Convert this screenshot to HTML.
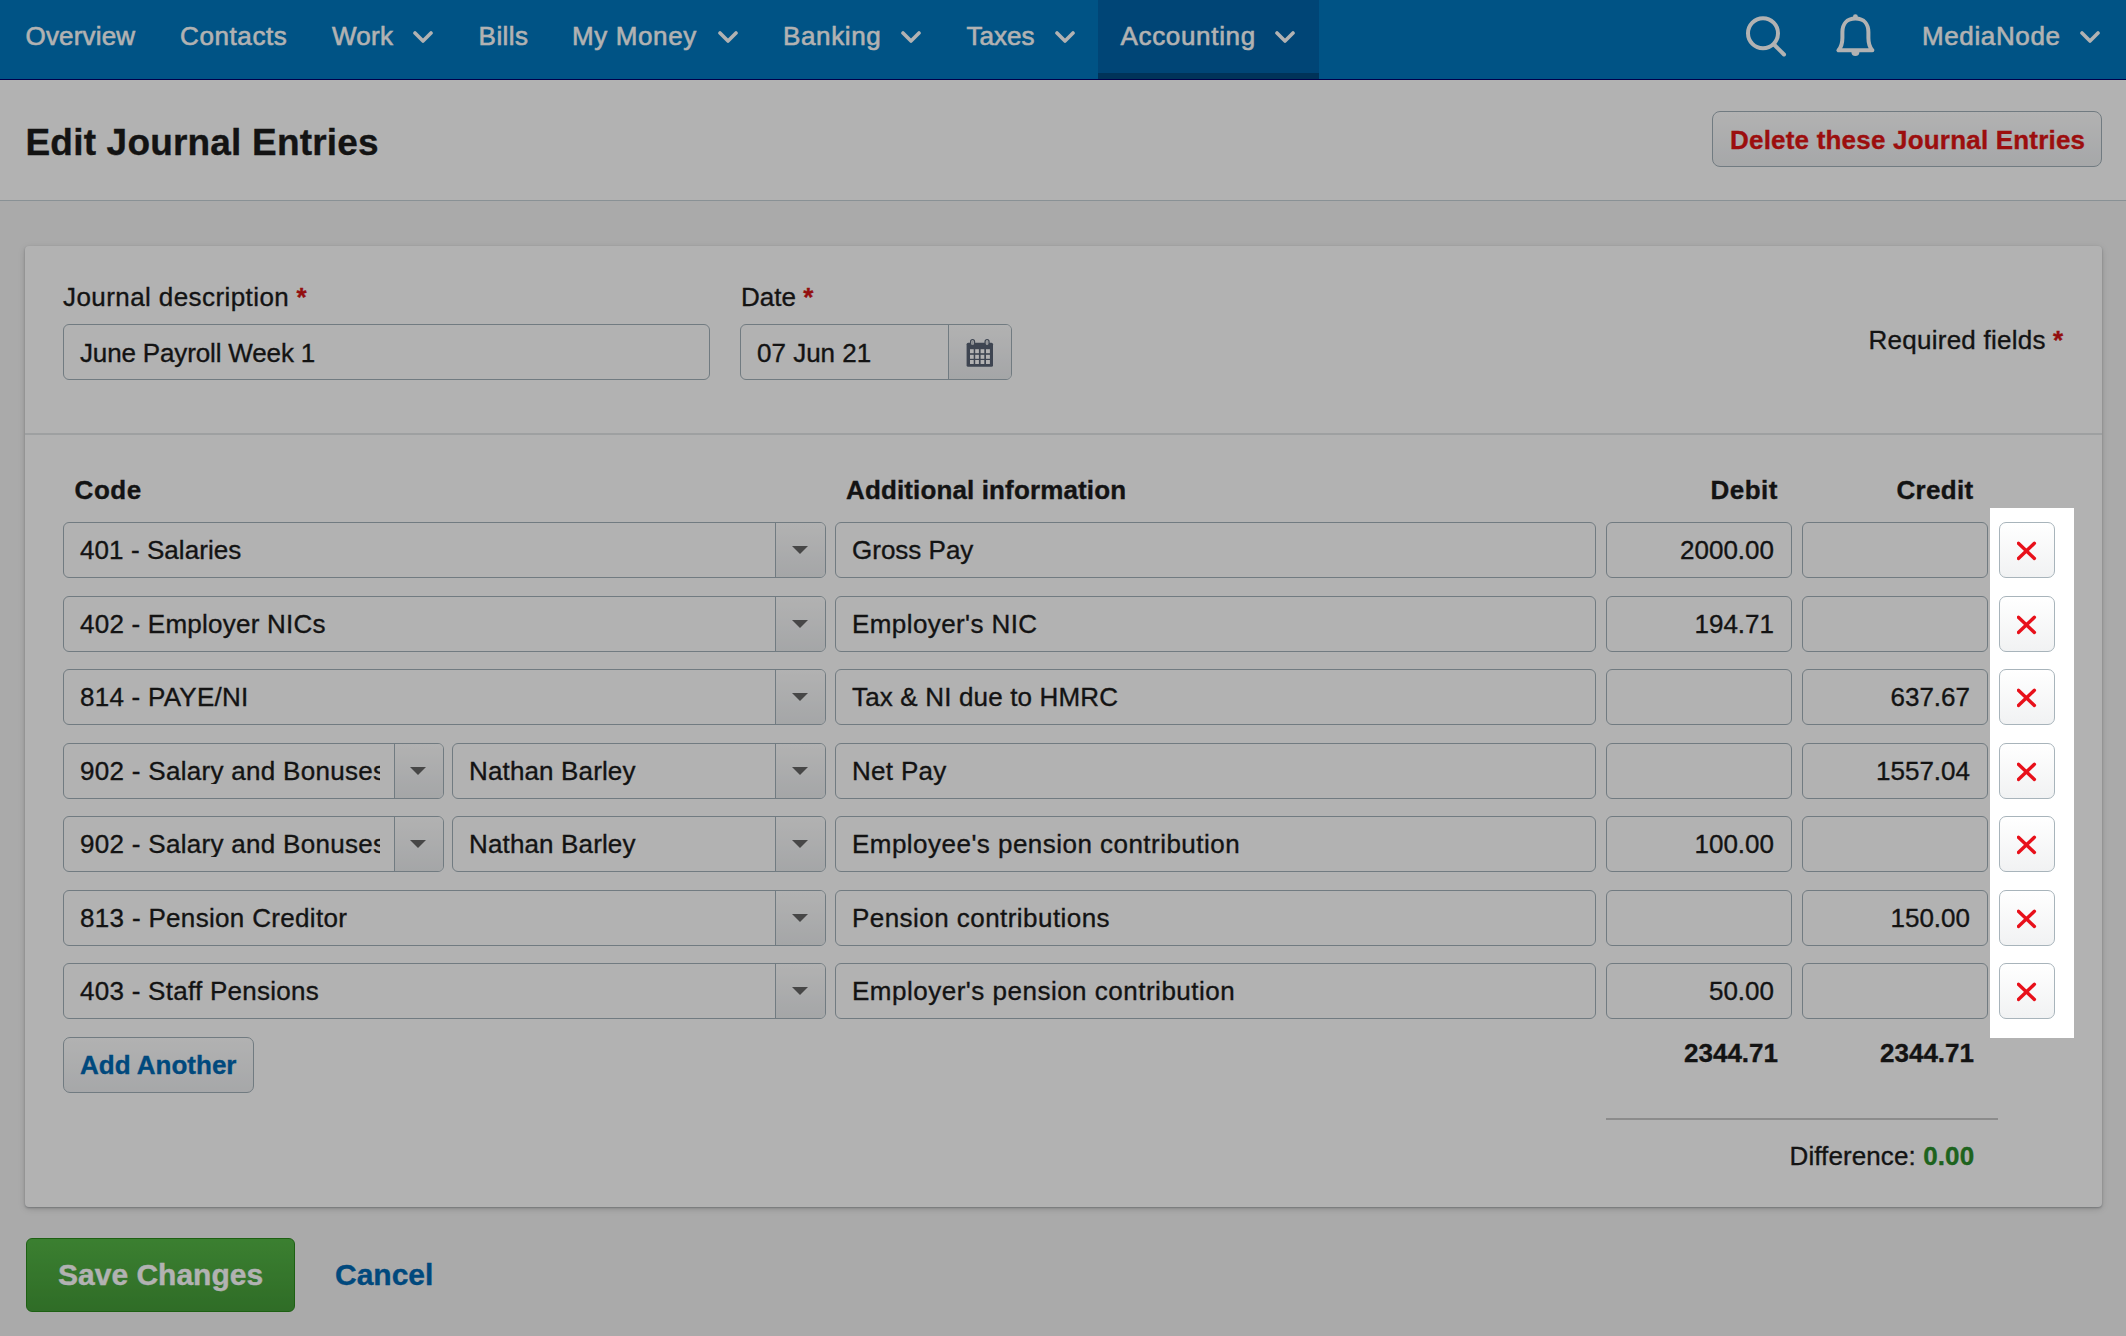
<!DOCTYPE html>
<html><head><meta charset="utf-8">
<style>
*{box-sizing:border-box;margin:0;padding:0}
html,body{width:2126px;height:1336px;overflow:hidden}
body{position:relative;background:#f4f4f4;font-family:"Liberation Sans",sans-serif;color:#1c1c1c;-webkit-text-stroke:0.35px currentColor}
.a{position:absolute}
.t{position:absolute;line-height:1;white-space:nowrap}
.b{font-weight:bold}
#nav{left:0;top:0;width:2126px;height:79px;background:#0078bf}
#navline{left:0;top:79px;width:2126px;height:1px;background:#00006a}
.nt{color:#fff;font-size:26px;top:23px;-webkit-text-stroke:0.55px #fff}
.chev{position:absolute;top:31px;width:20px;height:12px}
#active{left:1098px;top:0;width:221px;height:79px;background:#0063aa}
#activestrip{left:1098px;top:73px;width:221px;height:6px;background:#004a80}
#hdr{left:0;top:80px;width:2126px;height:120px;background:#fff}
#hdrline{left:0;top:200px;width:2126px;height:1px;background:#c5d0d6}
.btn{position:absolute;border:1px solid #a3b1b9;border-radius:8px;background:linear-gradient(#fff,#eef0f2)}
#card{left:25px;top:246px;width:2077px;height:961px;background:#fff;border-radius:4px;box-shadow:0 1px 2px rgba(30,40,50,.28),0 2px 7px rgba(0,0,0,.16)}
.inp{position:absolute;height:56px;border:1px solid #a3b1b9;border-radius:6px;background:#fff;overflow:hidden}
.it{position:absolute;top:14px;left:16px;font-size:26px;line-height:1;white-space:nowrap}
.sel .seg{position:absolute;right:0;top:0;bottom:0;width:50px;border-left:1px solid #a3b1b9;background:linear-gradient(#fff,#eceef0)}
.sel .tri{position:absolute;left:16px;top:23px;width:0;height:0;border-left:8px solid transparent;border-right:8px solid transparent;border-top:8px solid #666}
.num .it{left:auto;right:17px}
.req{color:#d31616}
.xb{position:absolute;left:1999px;width:56px;height:56px;border:1px solid #a8b4bb;border-radius:7px;background:linear-gradient(#fff,#f1f2f3)}
#hl{left:1990px;top:508px;width:84px;height:530px;box-shadow:0 0 0 5000px rgba(0,0,0,.3)}
</style></head>
<body>
<!-- NAV -->
<div class="a" id="nav"></div>
<div class="a" id="active"></div>
<div class="a" id="activestrip"></div>
<div class="a" id="navline"></div>
<div class="t nt" style="left:25.5px;letter-spacing:0.17px">Overview</div>
<div class="t nt" style="left:180px;letter-spacing:0.6px">Contacts</div>
<div class="t nt" style="left:332px;letter-spacing:0.25px">Work</div>
<svg class="chev" style="left:413px" viewBox="0 0 20 12"><path d="M2 2 L10 10 L18 2" fill="none" stroke="#fff" stroke-width="3.6" stroke-linecap="round" stroke-linejoin="round"/></svg>
<div class="t nt" style="left:478.6px;letter-spacing:0.45px">Bills</div>
<div class="t nt" style="left:572px;letter-spacing:0.62px">My Money</div>
<svg class="chev" style="left:718px" viewBox="0 0 20 12"><path d="M2 2 L10 10 L18 2" fill="none" stroke="#fff" stroke-width="3.6" stroke-linecap="round" stroke-linejoin="round"/></svg>
<div class="t nt" style="left:783px;letter-spacing:0.63px">Banking</div>
<svg class="chev" style="left:901px" viewBox="0 0 20 12"><path d="M2 2 L10 10 L18 2" fill="none" stroke="#fff" stroke-width="3.6" stroke-linecap="round" stroke-linejoin="round"/></svg>
<div class="t nt" style="left:966.5px;letter-spacing:0.05px">Taxes</div>
<svg class="chev" style="left:1055px" viewBox="0 0 20 12"><path d="M2 2 L10 10 L18 2" fill="none" stroke="#fff" stroke-width="3.6" stroke-linecap="round" stroke-linejoin="round"/></svg>
<div class="t nt" style="left:1120.5px;letter-spacing:0.67px">Accounting</div>
<svg class="chev" style="left:1275px" viewBox="0 0 20 12"><path d="M2 2 L10 10 L18 2" fill="none" stroke="#fff" stroke-width="3.6" stroke-linecap="round" stroke-linejoin="round"/></svg>
<svg class="a" style="left:1740px;top:10px" width="52" height="52" viewBox="0 0 52 52"><circle cx="23" cy="23.3" r="15" fill="none" stroke="#fff" stroke-width="4"/><path d="M34 34.5 L44 44.5" stroke="#fff" stroke-width="4" stroke-linecap="round"/></svg>
<svg class="a" style="left:1830px;top:10px" width="52" height="50" viewBox="0 0 52 50"><path d="M25.4 8.6 C16.5 8.6 12.4 14.5 12.4 22 L12.4 28 C12.4 33 11.4 37 8.4 40.3 L42.4 40.3 C39.4 37 38.4 33 38.4 28 L38.4 22 C38.4 14.5 34.3 8.6 25.4 8.6 Z" fill="none" stroke="#fff" stroke-width="4" stroke-linejoin="round"/><circle cx="25.4" cy="6.6" r="2.4" fill="#fff"/><path d="M21.4 42 A4 4 0 0 0 29.4 42 Z" fill="#fff"/></svg>
<div class="t nt" style="left:1922px;letter-spacing:0.62px">MediaNode</div>
<svg class="chev" style="left:2080px" viewBox="0 0 20 12"><path d="M2 2 L10 10 L18 2" fill="none" stroke="#fff" stroke-width="3.6" stroke-linecap="round" stroke-linejoin="round"/></svg>

<!-- HEADER -->
<div class="a" id="hdr"></div>
<div class="a" id="hdrline"></div>
<div class="t b" style="left:25.5px;top:124px;font-size:37px;letter-spacing:0.19px">Edit Journal Entries</div>
<div class="btn" style="left:1712px;top:111px;width:390px;height:56px"></div>
<div class="t b" style="left:1730px;top:127px;font-size:26px;color:#e01515;letter-spacing:0.2px">Delete these Journal Entries</div>

<!-- CARD -->
<div class="a" id="card"></div>
<div class="a" style="left:25px;top:433px;width:2077px;height:2px;background:#e2e5e7"></div>
<div class="t" style="left:63px;top:284px;font-size:26px"><span style="letter-spacing:0.42px">Journal description</span> <span class="req b">*</span></div>
<div class="inp" style="left:63px;top:324px;width:647px"><div class="it" style="top:15px;letter-spacing:-0.15px">June Payroll Week 1</div></div>
<div class="t" style="left:741px;top:284px;font-size:26px">Date <span class="req b">*</span></div>
<div class="inp sel" style="left:740px;top:324px;width:272px"><div class="it" style="top:15px">07 Jun 21</div><div class="seg" style="width:63px"><svg class="a" style="left:17px;top:13px" width="28" height="30" viewBox="0 0 28 30"><rect x="0.6" y="4.8" width="26.4" height="24" rx="1.5" fill="#596475"/><rect x="4.6" y="1.6" width="3.9" height="6" rx="1.9" fill="#fff" stroke="#596475" stroke-width="1.3"/><rect x="19.1" y="1.6" width="3.9" height="6" rx="1.9" fill="#fff" stroke="#596475" stroke-width="1.3"/><rect x="5.8" y="3" width="1.5" height="4" fill="#596475" opacity="0.35"/><rect x="20.3" y="3" width="1.5" height="4" fill="#596475" opacity="0.35"/><g fill="#fff"><rect x="4" y="11.2" width="3.7" height="4"/><rect x="9.2" y="11.2" width="3.7" height="4"/><rect x="14.6" y="11.2" width="3.7" height="4"/><rect x="20" y="11.2" width="3.9" height="4"/><rect x="4" y="16.8" width="3.7" height="4"/><rect x="9.2" y="16.8" width="3.7" height="4"/><rect x="14.6" y="16.8" width="3.7" height="4"/><rect x="20" y="16.8" width="3.9" height="4"/><rect x="4" y="22" width="3.7" height="4"/><rect x="9.2" y="22" width="3.7" height="4"/><rect x="14.6" y="22" width="3.7" height="4"/><rect x="20" y="22" width="3.9" height="4"/></g></svg></div></div>
<div class="t" style="left:1868.5px;top:327px;font-size:26px"><span style="letter-spacing:0.26px">Required fields</span> <span class="req b">*</span></div>

<!-- TABLE HEADERS -->
<div class="t b" style="left:74.5px;top:477px;font-size:26px;letter-spacing:0.6px">Code</div>
<div class="t b" style="left:846px;top:477px;font-size:26px;letter-spacing:0.13px">Additional information</div>
<div class="t b" style="left:1710.5px;top:477px;font-size:26px;letter-spacing:0.5px">Debit</div>
<div class="t b" style="left:1896.5px;top:477px;font-size:26px;letter-spacing:0.3px">Credit</div>

<div class="inp sel" style="left:63px;top:522px;width:763px"><div class="it" style="letter-spacing:0.07px">401 - Salaries</div><div class="seg"><div class="tri"></div></div></div>
<div class="inp" style="left:835px;top:522px;width:761px"><div class="it" style="letter-spacing:0px">Gross Pay</div></div>
<div class="inp num" style="left:1606px;top:522px;width:186px"><div class="it">2000.00</div></div>
<div class="inp num" style="left:1802px;top:522px;width:186px"><div class="it"></div></div>
<div class="xb" style="top:522px"><svg class="a" style="left:17px;top:18px" width="20" height="20" viewBox="0 0 20 20"><path d="M1.4 2.3 L17.4 17.4 M17.4 2.3 L1.4 17.4" stroke="#e8101a" stroke-width="3.4" stroke-linecap="round"/></svg></div>
<div class="inp sel" style="left:63px;top:596px;width:763px"><div class="it" style="letter-spacing:0.23px">402 - Employer NICs</div><div class="seg"><div class="tri"></div></div></div>
<div class="inp" style="left:835px;top:596px;width:761px"><div class="it" style="letter-spacing:0.41px">Employer's NIC</div></div>
<div class="inp num" style="left:1606px;top:596px;width:186px"><div class="it">194.71</div></div>
<div class="inp num" style="left:1802px;top:596px;width:186px"><div class="it"></div></div>
<div class="xb" style="top:596px"><svg class="a" style="left:17px;top:18px" width="20" height="20" viewBox="0 0 20 20"><path d="M1.4 2.3 L17.4 17.4 M17.4 2.3 L1.4 17.4" stroke="#e8101a" stroke-width="3.4" stroke-linecap="round"/></svg></div>
<div class="inp sel" style="left:63px;top:669px;width:763px"><div class="it" style="letter-spacing:0.25px">814 - PAYE/NI</div><div class="seg"><div class="tri"></div></div></div>
<div class="inp" style="left:835px;top:669px;width:761px"><div class="it" style="letter-spacing:0.16px">Tax &amp; NI due to HMRC</div></div>
<div class="inp num" style="left:1606px;top:669px;width:186px"><div class="it"></div></div>
<div class="inp num" style="left:1802px;top:669px;width:186px"><div class="it">637.67</div></div>
<div class="xb" style="top:669px"><svg class="a" style="left:17px;top:18px" width="20" height="20" viewBox="0 0 20 20"><path d="M1.4 2.3 L17.4 17.4 M17.4 2.3 L1.4 17.4" stroke="#e8101a" stroke-width="3.4" stroke-linecap="round"/></svg></div>
<div class="inp sel" style="left:63px;top:743px;width:381px"><div class="it" style="width:300px;overflow:hidden;letter-spacing:0.3px">902 - Salary and Bonuses</div><div class="seg" style="width:49px"><div class="tri" style="left:15px"></div></div></div>
<div class="inp sel" style="left:452px;top:743px;width:374px"><div class="it" style="letter-spacing:0.14px">Nathan Barley</div><div class="seg" style="width:50px"><div class="tri"></div></div></div>
<div class="inp" style="left:835px;top:743px;width:761px"><div class="it" style="letter-spacing:0.3px">Net Pay</div></div>
<div class="inp num" style="left:1606px;top:743px;width:186px"><div class="it"></div></div>
<div class="inp num" style="left:1802px;top:743px;width:186px"><div class="it">1557.04</div></div>
<div class="xb" style="top:743px"><svg class="a" style="left:17px;top:18px" width="20" height="20" viewBox="0 0 20 20"><path d="M1.4 2.3 L17.4 17.4 M17.4 2.3 L1.4 17.4" stroke="#e8101a" stroke-width="3.4" stroke-linecap="round"/></svg></div>
<div class="inp sel" style="left:63px;top:816px;width:381px"><div class="it" style="width:300px;overflow:hidden;letter-spacing:0.3px">902 - Salary and Bonuses</div><div class="seg" style="width:49px"><div class="tri" style="left:15px"></div></div></div>
<div class="inp sel" style="left:452px;top:816px;width:374px"><div class="it" style="letter-spacing:0.14px">Nathan Barley</div><div class="seg" style="width:50px"><div class="tri"></div></div></div>
<div class="inp" style="left:835px;top:816px;width:761px"><div class="it" style="letter-spacing:0.47px">Employee's pension contribution</div></div>
<div class="inp num" style="left:1606px;top:816px;width:186px"><div class="it">100.00</div></div>
<div class="inp num" style="left:1802px;top:816px;width:186px"><div class="it"></div></div>
<div class="xb" style="top:816px"><svg class="a" style="left:17px;top:18px" width="20" height="20" viewBox="0 0 20 20"><path d="M1.4 2.3 L17.4 17.4 M17.4 2.3 L1.4 17.4" stroke="#e8101a" stroke-width="3.4" stroke-linecap="round"/></svg></div>
<div class="inp sel" style="left:63px;top:890px;width:763px"><div class="it" style="letter-spacing:0.32px">813 - Pension Creditor</div><div class="seg"><div class="tri"></div></div></div>
<div class="inp" style="left:835px;top:890px;width:761px"><div class="it" style="letter-spacing:0.45px">Pension contributions</div></div>
<div class="inp num" style="left:1606px;top:890px;width:186px"><div class="it"></div></div>
<div class="inp num" style="left:1802px;top:890px;width:186px"><div class="it">150.00</div></div>
<div class="xb" style="top:890px"><svg class="a" style="left:17px;top:18px" width="20" height="20" viewBox="0 0 20 20"><path d="M1.4 2.3 L17.4 17.4 M17.4 2.3 L1.4 17.4" stroke="#e8101a" stroke-width="3.4" stroke-linecap="round"/></svg></div>
<div class="inp sel" style="left:63px;top:963px;width:763px"><div class="it" style="letter-spacing:0.27px">403 - Staff Pensions</div><div class="seg"><div class="tri"></div></div></div>
<div class="inp" style="left:835px;top:963px;width:761px"><div class="it" style="letter-spacing:0.5px">Employer's pension contribution</div></div>
<div class="inp num" style="left:1606px;top:963px;width:186px"><div class="it">50.00</div></div>
<div class="inp num" style="left:1802px;top:963px;width:186px"><div class="it"></div></div>
<div class="xb" style="top:963px"><svg class="a" style="left:17px;top:18px" width="20" height="20" viewBox="0 0 20 20"><path d="M1.4 2.3 L17.4 17.4 M17.4 2.3 L1.4 17.4" stroke="#e8101a" stroke-width="3.4" stroke-linecap="round"/></svg></div>

<!-- TOTALS -->
<div class="btn" style="left:63px;top:1037px;width:191px;height:56px;border-radius:7px"></div>
<div class="t b" style="left:80px;top:1052px;font-size:26px;color:#0069b4">Add Another</div>
<div class="t b" style="left:1684px;top:1040px;font-size:26px">2344.71</div>
<div class="t b" style="left:1880px;top:1040px;font-size:26px">2344.71</div>
<div class="a" style="left:1606px;top:1118px;width:392px;height:2px;background:#c9c9c9"></div>
<div class="t" style="left:1789.5px;top:1143px;font-size:26px;letter-spacing:0.1px">Difference: <span class="b" style="color:#2b8f2b">0.00</span></div>

<!-- FOOTER -->
<div class="a" style="left:26px;top:1238px;width:269px;height:74px;border:1px solid #2a8a1c;border-radius:6px;background:linear-gradient(#55b746,#449c38)"></div>
<div class="t b" style="left:58px;top:1260px;font-size:30px;color:#fff">Save Changes</div>
<div class="t b" style="left:335px;top:1260px;font-size:30px;color:#0069b4">Cancel</div>

<div class="a" id="hl"></div>
</body></html>
